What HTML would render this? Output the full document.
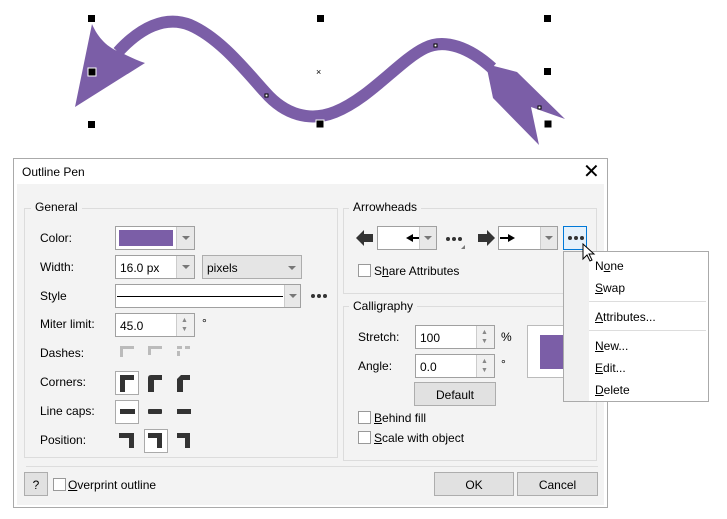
<!DOCTYPE html>
<html><head><style>
*{box-sizing:border-box;margin:0;padding:0}
body{width:727px;height:519px;background:#fff;font-family:"Liberation Sans",sans-serif;font-size:12px;color:#000;position:relative;overflow:hidden}
.a{position:absolute}
.dlg{left:13px;top:158px;width:595px;height:350px;border:1px solid #aaa;background:#fff}
.body{left:17px;top:184px;width:587px;height:321px;background:#f3f3f3}
.grp{border:1px solid #dcdcdc}
.gl{background:#f3f3f3;padding:0 4px}
.in{background:#fff;border:1px solid #a0a0a0}
.dd{border-left:1px solid #ccc;background:#e8e8e8}
.tri{width:0;height:0;border-left:4px solid transparent;border-right:4px solid transparent;border-top:4px solid #777}
.btn{background:#e1e1e1;border:1px solid #adadad;text-align:center}
.cb{width:13px;height:13px;border:1px solid #999;background:#fff}
u{text-decoration:underline}
.dots{display:flex;gap:2px}
.dots i{display:block;width:4px;height:4px;border-radius:2px;background:#333}
</style></head><body>
<svg class="a" style="left:0;top:0" width="727" height="150">
<path d="M118,52 C140,28 165,15 190,25 C220,38 245,70 265,92 C285,115 310,122 335,112 C370,98 400,60 425,48 C445,38 470,48 492,68" fill="none" stroke="#7b5ea7" stroke-width="12"/>
<path d="M92,24 C98,38 108,48 120,52 C128,56 136,60 145,63 L75,107 Z" fill="#7b5ea7"/>
<path d="M486,64 L517,72 L565,119 L531,107 L539,145 L493,98 Z" fill="#7b5ea7"/>
<rect x="88" y="15" width="7" height="7"/><rect x="317" y="15" width="7" height="7"/><rect x="544" y="15" width="7" height="7"/>
<rect x="88" y="68" width="8" height="8" stroke="#fff"/><rect x="544" y="68" width="7" height="7"/>
<rect x="88" y="121" width="7" height="7"/><rect x="316" y="120" width="8" height="8" stroke="#fff"/><rect x="544" y="120" width="8" height="8" stroke="#fff"/>
<text x="316" y="75" font-size="9">×</text>
<rect x="265" y="94" width="3" height="3" fill="#fff" stroke="#000"/><rect x="434" y="44" width="3" height="3" fill="#fff" stroke="#000"/><rect x="538" y="106" width="3" height="3" fill="#fff" stroke="#000"/>
</svg>
<div class="a dlg"></div>
<div class="a" style="left:22px;top:165px">Outline Pen</div>
<div class="a" style="left:583px;top:159px;font-size:20px">✕</div>
<div class="a body"></div>
<!-- General -->
<div class="a grp" style="left:24px;top:208px;width:314px;height:250px"></div>
<div class="a gl" style="left:31px;top:200px">General</div>
<div class="a" style="left:40px;top:231px">Color:</div>
<div class="a" style="left:40px;top:260px">Width:</div>
<div class="a" style="left:40px;top:289px">Style</div>
<div class="a" style="left:40px;top:317px">Miter limit:</div>
<div class="a" style="left:40px;top:346px">Dashes:</div>
<div class="a" style="left:40px;top:375px">Corners:</div>
<div class="a" style="left:40px;top:404px">Line caps:</div>
<div class="a" style="left:40px;top:433px">Position:</div>
<div class="a in" style="left:115px;top:226px;width:80px;height:24px"><div class="a" style="left:3px;top:3px;width:54px;height:16px;background:#7b5ea7"></div><div class="a dd" style="left:60px;top:0;width:18px;height:22px"><div class="a tri" style="left:5px;top:9px"></div></div></div>
<div class="a in" style="left:115px;top:255px;width:80px;height:24px"><div class="a" style="left:4px;top:5px">16.0 px</div><div class="a dd" style="left:60px;top:0;width:18px;height:22px"><div class="a tri" style="left:5px;top:9px"></div></div></div>
<div class="a" style="left:202px;top:255px;width:100px;height:24px;background:#e5e5e5;border:1px solid #adadad"><div class="a" style="left:4px;top:5px">pixels</div><div class="a tri" style="left:85px;top:10px"></div></div>
<div class="a in" style="left:115px;top:284px;width:186px;height:24px"><div class="a" style="left:1px;top:11px;width:166px;height:1px;background:#000"></div><div class="a dd" style="left:168px;top:0;width:16px;height:22px"><div class="a tri" style="left:4px;top:9px"></div></div></div>
<div class="a dots" style="left:311px;top:294px"><i></i><i></i><i></i></div>
<div class="a in" style="left:115px;top:313px;width:80px;height:24px"><div class="a" style="left:4px;top:5px">45.0</div><div class="a dd" style="left:60px;top:0;width:18px;height:22px;background:#f0f0f0"><div class="a" style="left:4px;top:3px;font-size:7px;color:#888">▲</div><div class="a" style="left:4px;top:12px;font-size:7px;color:#888">▼</div></div></div>
<div class="a" style="left:202px;top:316px">°</div>
<svg class="a" style="left:110px;top:340px" width="100" height="115">
<g fill="#bbb"><rect x="10" y="6" width="14" height="3"/><rect x="10" y="9" width="3" height="8"/><rect x="38" y="6" width="14" height="3"/><rect x="38" y="9" width="3" height="6"/><rect x="67" y="6" width="5" height="3"/><rect x="75" y="6" width="5" height="3"/><rect x="67" y="11" width="3" height="5"/></g>
<rect x="5.5" y="31.5" width="23" height="23" fill="#fff" stroke="#aaa"/>
<g fill="#333"><path d="M10,35h14v5h-9v12h-5z"/><path d="M38,38q0-3 3-3h11v5h-8v12h-6z"/><path d="M67,39l4-4h9v5h-7v12h-6z"/></g>
<rect x="5.5" y="60.5" width="23" height="23" fill="#fff" stroke="#aaa"/>
<g fill="#333"><rect x="10" y="69" width="15" height="5"/><rect x="38" y="69" width="14" height="5" rx="1"/><rect x="67" y="69" width="14" height="5"/></g>
<rect x="34.5" y="89.5" width="23" height="23" fill="#fff" stroke="#aaa"/>
<g fill="#333"><path d="M9,93h15v15h-5v-10h-10z"/><path d="M38,93h14v15h-5v-10h-9z"/><path d="M67,93h13v15h-5v-10h-8z"/></g>
</svg>
<!-- Arrowheads -->
<div class="a grp" style="left:343px;top:208px;width:254px;height:86px"></div>
<div class="a gl" style="left:349px;top:200px">Arrowheads</div>
<svg class="a" style="left:356px;top:230px" width="20" height="17"><path d="M0,8 L8,0 V4 H17 V12 H8 V16 Z" fill="#333"/></svg>
<div class="a in" style="left:377px;top:226px;width:60px;height:24px"><svg class="a" style="left:28px;top:6px" width="14" height="10"><path d="M0,5 L7,1 V9 Z M6,4h8v2h-8z" fill="#000"/></svg><div class="a dd" style="left:41px;top:0;width:17px;height:22px"><div class="a tri" style="left:4px;top:9px"></div></div></div>
<div class="a dots" style="left:446px;top:237px"><i></i><i></i><i></i></div>
<div class="a" style="left:461px;top:245px;width:0;height:0;border-left:4px solid transparent;border-bottom:4px solid #777"></div>
<svg class="a" style="left:478px;top:230px" width="20" height="17"><path d="M17,8 L9,0 V4 H0 V12 H9 V16 Z" fill="#333"/></svg>
<div class="a in" style="left:498px;top:226px;width:60px;height:24px"><svg class="a" style="left:1px;top:6px" width="16" height="10"><path d="M0,4h9v2h-9z M8,1 L15,5 L8,9 Z" fill="#000"/></svg><div class="a dd" style="left:41px;top:0;width:17px;height:22px"><div class="a tri" style="left:4px;top:9px"></div></div></div>
<div class="a" style="left:563px;top:226px;width:24px;height:24px;background:#e5f1fb;border:1px solid #0078d7"><div class="a dots" style="left:4px;top:9px"><i></i><i></i><i></i></div></div>
<div class="a cb" style="left:358px;top:264px"></div>
<div class="a" style="left:374px;top:264px">S<u>h</u>are Attributes</div>
<!-- Calligraphy -->
<div class="a grp" style="left:343px;top:306px;width:254px;height:155px"></div>
<div class="a gl" style="left:349px;top:299px">Calligraphy</div>
<div class="a" style="left:358px;top:330px">Stretch:</div>
<div class="a" style="left:358px;top:359px">Angle:</div>
<div class="a in" style="left:415px;top:325px;width:80px;height:24px"><div class="a" style="left:4px;top:5px">100</div><div class="a dd" style="left:60px;top:0;width:18px;height:22px;background:#f0f0f0"><div class="a" style="left:4px;top:3px;font-size:7px;color:#888">▲</div><div class="a" style="left:4px;top:12px;font-size:7px;color:#888">▼</div></div></div>
<div class="a" style="left:501px;top:330px">%</div>
<div class="a in" style="left:415px;top:354px;width:80px;height:24px"><div class="a" style="left:4px;top:5px">0.0</div><div class="a dd" style="left:60px;top:0;width:18px;height:22px;background:#f0f0f0"><div class="a" style="left:4px;top:3px;font-size:7px;color:#888">▲</div><div class="a" style="left:4px;top:12px;font-size:7px;color:#888">▼</div></div></div>
<div class="a" style="left:501px;top:357px">°</div>
<div class="a btn" style="left:414px;top:382px;width:82px;height:24px;padding-top:5px">Default</div>
<div class="a in" style="left:527px;top:325px;width:60px;height:53px;border-color:#bbb"><div class="a" style="left:12px;top:9px;width:30px;height:34px;background:#7b5ea7"></div></div>
<div class="a cb" style="left:358px;top:411px"></div>
<div class="a" style="left:374px;top:411px"><u>B</u>ehind fill</div>
<div class="a cb" style="left:358px;top:431px"></div>
<div class="a" style="left:374px;top:431px"><u>S</u>cale with object</div>
<!-- bottom -->
<div class="a" style="left:26px;top:466px;width:572px;height:1px;background:#ddd"></div>
<div class="a btn" style="left:24px;top:472px;width:24px;height:24px;padding-top:5px">?</div>
<div class="a cb" style="left:53px;top:478px"></div>
<div class="a" style="left:68px;top:478px"><u>O</u>verprint outline</div>
<div class="a btn" style="left:434px;top:472px;width:80px;height:24px;padding-top:5px">OK</div>
<div class="a btn" style="left:517px;top:472px;width:81px;height:24px;padding-top:5px">Cancel</div>
<!-- menu -->
<div class="a" style="left:563px;top:251px;width:146px;height:151px;background:#f0f0f0;border:1px solid #aaa"></div>
<div class="a" style="left:589px;top:252px;width:119px;height:149px;background:#fff"></div>
<div class="a" style="left:589px;top:301px;width:117px;height:1px;background:#ddd"></div>
<div class="a" style="left:589px;top:330px;width:117px;height:1px;background:#ddd"></div>
<div class="a" style="left:595px;top:259px">N<u>o</u>ne</div>
<div class="a" style="left:595px;top:281px"><u>S</u>wap</div>
<div class="a" style="left:595px;top:310px"><u>A</u>ttributes...</div>
<div class="a" style="left:595px;top:339px"><u>N</u>ew...</div>
<div class="a" style="left:595px;top:361px"><u>E</u>dit...</div>
<div class="a" style="left:595px;top:383px"><u>D</u>elete</div>
<svg class="a" style="left:582px;top:243px" width="14" height="20"><path d="M1,1 V16 L5,12 L8,18 L10,17 L7,11 L12,11 Z" fill="#fff" stroke="#000"/></svg>
</body></html>
